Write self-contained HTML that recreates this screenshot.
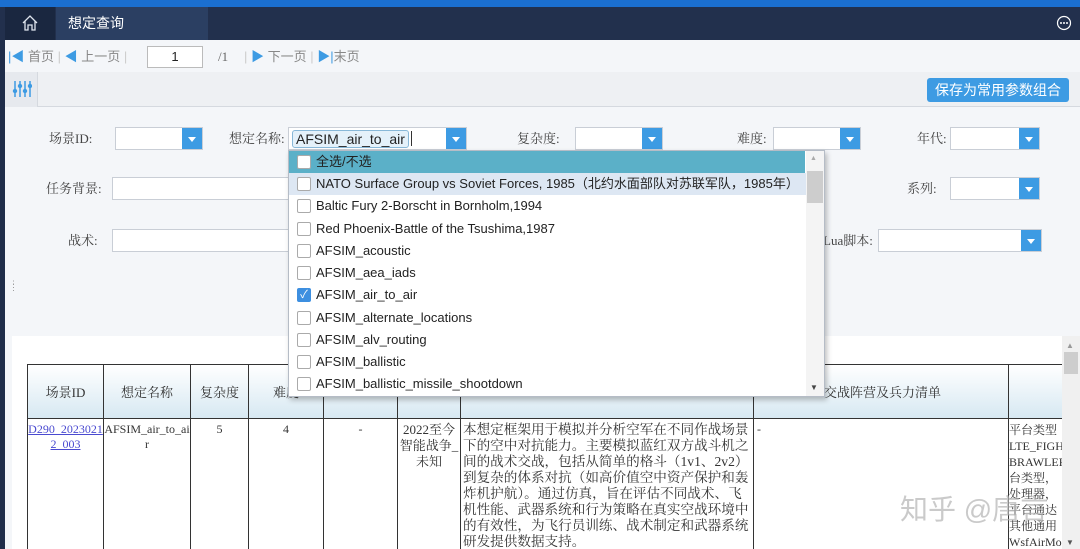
<!DOCTYPE html>
<html style="width:1080px;height:549px;overflow:hidden"><head><meta charset="utf-8"><style>
*{margin:0;padding:0;box-sizing:border-box}
body{width:1080px;height:549px;overflow:hidden;position:relative;background:#1f2d4a;font-family:"Liberation Sans","Noto Sans CJK SC",sans-serif;font-size:13px;color:#333}
.abs{position:absolute}
.serif{font-family:"Liberation Serif","Noto Serif CJK SC",serif}
.sel{position:absolute;height:23px;background:#fff;border:1px solid #c9ced6}
.sel .ar{position:absolute;right:0;top:0;width:20px;height:21px;background:#3d9be3}
.sel .ar:after{content:"";position:absolute;left:6px;top:9px;border-left:4px solid transparent;border-right:4px solid transparent;border-top:5px solid #fff}
.lbl{position:absolute;font-size:13px;color:#444;line-height:16px}
.item{position:absolute;left:0;width:518px;height:22px;font-size:13px;color:#222;padding-left:27px;line-height:22px}
.cb{position:absolute;left:8px;top:4px;width:14px;height:14px;border:1px solid #aaa;background:#fff;border-radius:2px}
td,th{border:1px solid #333}
</style></head><body>
<div class="abs" style="left:0;top:0;width:1080px;height:7px;background:#1b6fd0"></div>
<div class="abs" style="left:0;top:7px;width:1080px;height:33px;background:#22304d"></div>
<div class="abs" style="left:5px;top:7px;width:50px;height:33px;background:#1a2740"></div>
<svg class="abs" style="left:21px;top:14px" width="18" height="18" viewBox="0 0 18 18"><path d="M2 9 L9 2 L16 9 M4 7 V16 H7 V11 H11 V16 H14 V7" fill="none" stroke="#dfe5ee" stroke-width="1.3"/></svg>
<div class="abs" style="left:56px;top:7px;width:152px;height:33px;background:#2b3f62;color:#fff;font-size:14px;line-height:33px;padding-left:12px">想定查询</div>
<svg class="abs" style="left:1056px;top:15px" width="16" height="16"><circle cx="8" cy="8" r="6.5" fill="none" stroke="#fff" stroke-width="1.2"/><circle cx="5" cy="8" r="1" fill="#fff"/><circle cx="8" cy="8" r="1" fill="#fff"/><circle cx="11" cy="8" r="1" fill="#fff"/></svg>
<div class="abs" style="left:5px;top:40px;width:1075px;height:509px;background:#f4f6f9"></div>
<div class="abs" style="left:8px;top:48px;font-size:13px;color:#888;line-height:18px">
<span style="color:#3d9be3">|◀</span> 首页 <span style="color:#ccc">|</span> <span style="color:#3d9be3">◀</span> 上一页 <span style="color:#ccc">|</span></div>
<div class="abs" style="left:147px;top:46px;width:56px;height:22px;background:#fff;border:1px solid #bbb;text-align:center;line-height:20px;font-size:13px;color:#222">1</div>
<div class="abs serif" style="left:218px;top:49px;color:#666">/1</div>
<div class="abs" style="left:244px;top:48px;font-size:13px;color:#888;line-height:18px"><span style="color:#ccc">|</span> <span style="color:#3d9be3">▶</span> 下一页 <span style="color:#ccc">|</span> <span style="color:#3d9be3">▶|</span>末页</div>
<div class="abs" style="left:5px;top:72px;width:1075px;height:35px;background:#eef0f3;border-bottom:1px solid #d5d9df"></div>
<div class="abs" style="left:5px;top:72px;width:33px;height:35px;background:#e6e9ee;border-right:1px solid #d5d9df"></div>
<svg class="abs" style="left:12px;top:80px" width="20" height="18"><g stroke="#3d9be3" stroke-width="1.5"><path d="M3 1V17M8 1V17M13 1V17M18 1V17"/></g><g fill="#3d9be3"><circle cx="3" cy="11" r="2.2"/><circle cx="8" cy="6" r="2.2"/><circle cx="13" cy="11" r="2.2"/><circle cx="18" cy="6" r="2.2"/></g></svg>
<div class="abs" style="left:927px;top:78px;width:142px;height:24px;background:#3d9be3;color:#fff;border-radius:3px;font-size:14px;text-align:center;line-height:24px">保存为常用参数组合</div>
<div class="lbl serif" style="left:49px;top:131px">场景ID:</div>
<div class="sel" style="left:115px;top:127px;width:88px"><div class="ar"></div></div>
<div class="lbl serif" style="left:229px;top:131px">想定名称:</div>
<div class="sel" style="left:288px;top:127px;width:179px"><div style="position:absolute;left:3px;top:2px;height:18px;padding:0 3px;border:1px solid #88b8d8;background:#e4f1fa;border-radius:3px;font-size:14px;line-height:16px;color:#222">AFSIM_air_to_air</div><div style="position:absolute;left:122px;top:3px;width:1px;height:15px;background:#333"></div><div class="ar"></div></div>
<div class="lbl serif" style="left:517px;top:131px">复杂度:</div>
<div class="sel" style="left:575px;top:127px;width:88px"><div class="ar"></div></div>
<div class="lbl serif" style="left:737px;top:131px">难度:</div>
<div class="sel" style="left:773px;top:127px;width:88px"><div class="ar"></div></div>
<div class="lbl serif" style="left:917px;top:131px">年代:</div>
<div class="sel" style="left:950px;top:127px;width:90px"><div class="ar"></div></div>
<div class="lbl serif" style="left:46px;top:181px">任务背景:</div>
<div class="sel" style="left:112px;top:177px;width:200px"></div>
<div class="lbl serif" style="left:907px;top:181px">系列:</div>
<div class="sel" style="left:950px;top:177px;width:90px"><div class="ar"></div></div>
<div class="lbl serif" style="left:68px;top:233px">战术:</div>
<div class="sel" style="left:112px;top:229px;width:200px"></div>
<div class="lbl serif" style="left:823px;top:233px">Lua脚本:</div>
<div class="sel" style="left:878px;top:229px;width:164px"><div class="ar"></div></div>
<div class="abs" style="left:9px;top:283px;color:#999;font-size:9px;line-height:3px">⋮<br>⋮</div>
<div class="abs" style="left:12px;top:336px;width:1050px;height:213px;background:#fff;overflow:hidden">
<table class="abs serif" style="left:15px;top:28px;width:1040px;border-collapse:collapse;font-size:13px;table-layout:fixed;color:#333">
<colgroup><col style="width:76px"><col style="width:87px"><col style="width:58px"><col style="width:75px"><col style="width:74px"><col style="width:63px"><col style="width:293px"><col style="width:255px"><col style="width:59px"></colgroup>
<tr style="height:54px;background:linear-gradient(#fff,#d6e8f2)"><th style="font-weight:normal">场景ID</th><th style="font-weight:normal">想定名称</th><th style="font-weight:normal">复杂度</th><th style="font-weight:normal">难度</th><th></th><th></th><th></th><th style="font-weight:normal;text-align:left;padding-left:70px">交战阵营及兵力清单</th><th></th></tr>
<tr style="height:150px;vertical-align:top;font-size:12px;line-height:15px"><td style="text-align:center;padding-top:3px;word-break:break-all"><u style="color:#4a4ad0">D290_20230212_003</u></td><td style="text-align:center;padding-top:3px;word-break:break-all">AFSIM_air_to_air</td><td style="text-align:center;padding-top:3px">5</td><td style="text-align:center;padding-top:3px">4</td><td style="text-align:center;padding-top:3px">-</td><td style="text-align:center;padding-top:3px;font-size:13px;line-height:16px">2022至今智能战争_未知</td><td style="padding:3px 2px;font-size:13.6px;line-height:16px">本想定框架用于模拟并分析空军在不同作战场景下的空中对抗能力。主要模拟蓝红双方战斗机之间的战术交战，包括从简单的格斗（1v1、2v2）到复杂的体系对抗（如高价值空中资产保护和轰炸机护航）。通过仿真，旨在评估不同战术、飞机性能、武器系统和行为策略在真实空战环境中的有效性，为飞行员训练、战术制定和武器系统研发提供数据支持。</td><td style="padding:3px">-</td><td style="padding:3px 0;overflow:hidden;white-space:nowrap;font-size:12px;line-height:16px">平台类型<br>LTE_FIGH<br>BRAWLER_<br>台类型，<br>处理器，<br>平台通达<br>其他通用<br>WsfAirMo<br>WsfPoint</td></tr>
</table>
</div>
<div class="abs" style="left:1062px;top:336px;width:18px;height:213px;background:#f0f0f0"></div>
<div class="abs" style="left:1064px;top:352px;width:14px;height:22px;background:#cdcdcd"></div>
<div class="abs" style="left:1066px;top:341px;font-size:8px;color:#999">▲</div>
<div class="abs" style="left:1066px;top:538px;font-size:8px;color:#555">▼</div>
<div class="abs" style="left:900px;top:488px;font-size:28px;color:rgba(180,180,180,.7)">知乎 @唐言</div>
<div class="abs" style="left:288px;top:150px;width:537px;height:247px;background:#fff;border:1px solid #b5bcc6;box-shadow:2px 3px 5px rgba(0,0,0,.25);overflow:hidden">
<div class="item" style="top:0;background:#5bb0c8;width:516px"><span class="cb"></span>全选/不选</div>
<div class="item" style="top:22px;background:#dde7f3"><span class="cb"></span>NATO Surface Group vs Soviet Forces, 1985（北约水面部队对苏联军队，1985年）</div>
<div class="item" style="top:44px"><span class="cb"></span>Baltic Fury 2-Borscht in Bornholm,1994</div>
<div class="item" style="top:67px"><span class="cb"></span>Red Phoenix-Battle of the Tsushima,1987</div>
<div class="item" style="top:89px"><span class="cb"></span>AFSIM_acoustic</div>
<div class="item" style="top:111px"><span class="cb"></span>AFSIM_aea_iads</div>
<div class="item" style="top:133px"><span class="cb" style="background:#3d8fe0;border-color:#3d8fe0;color:#fff;font-size:11px;line-height:12px;text-align:center">✓</span>AFSIM_air_to_air</div>
<div class="item" style="top:156px"><span class="cb"></span>AFSIM_alternate_locations</div>
<div class="item" style="top:178px"><span class="cb"></span>AFSIM_alv_routing</div>
<div class="item" style="top:200px"><span class="cb"></span>AFSIM_ballistic</div>
<div class="item" style="top:222px"><span class="cb"></span>AFSIM_ballistic_missile_shootdown</div>
<div class="abs" style="left:517px;top:0;width:18px;height:245px;background:#f4f4f4"></div>
<div class="abs" style="left:518px;top:20px;width:16px;height:32px;background:#cdcdcd"></div>
<div class="abs" style="left:521px;top:4px;font-size:7px;color:#aaa">▲</div>
<div class="abs" style="left:521px;top:232px;font-size:8px;color:#444">▼</div>
</div>
</body></html>
